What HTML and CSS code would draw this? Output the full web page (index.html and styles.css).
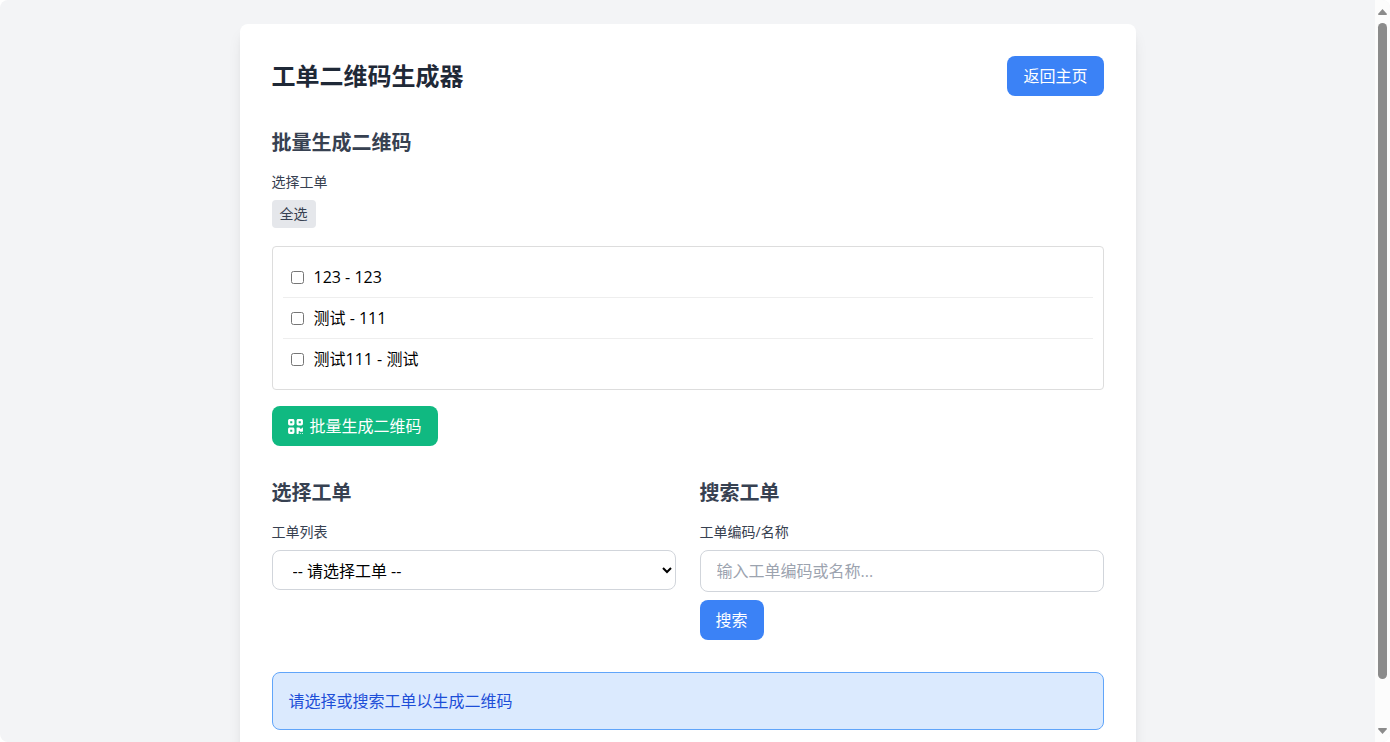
FILE: index.html
```html
<!DOCTYPE html>
<html lang="zh-CN">
<head>
  <meta charset="UTF-8" />
  <meta name="viewport" content="width=device-width, initial-scale=1.0" />
  <title>工单二维码生成器</title>
  <link rel="stylesheet" href="styles.css">
</head>
<body>
  <div class="page">
    <main class="card">
      <header class="card-header">
        <h1>工单二维码生成器</h1>
        <button type="button" class="btn btn-primary">返回主页</button>
      </header>

      <!-- Batch generation -->
      <section class="batch">
        <h2>批量生成二维码</h2>
        <p class="label" id="batchLabel">选择工单</p>
        <button type="button" class="btn-small">全选</button>
        <div class="order-list" role="group" aria-labelledby="batchLabel">
          <label class="order-item"><input type="checkbox" name="order" value="1" />123 - 123</label>
          <label class="order-item"><input type="checkbox" name="order" value="2" />测试 - 111</label>
          <label class="order-item"><input type="checkbox" name="order" value="3" />测试111 - 测试</label>
        </div>
        <button type="button" class="btn btn-success">
          <svg class="icon" viewBox="0 0 448 512" aria-hidden="true">
            <path d="M0 80C0 53.500 21.500 32 48 32h96c26.500 0 48 21.500 48 48v96c0 26.500-21.500 48-48 48H48c-26.500 0-48-21.500-48-48V80zM64 96v64h64V96H64zM0 336c0-26.500 21.500-48 48-48h96c26.500 0 48 21.500 48 48v96c0 26.500-21.500 48-48 48H48c-26.500 0-48-21.500-48-48V336zM64 352v64h64V352H64zM304 32h96c26.500 0 48 21.500 48 48v96c0 26.500-21.500 48-48 48H304c-26.500 0-48-21.500-48-48V80c0-26.500 21.500-48 48-48zM384 96H320v64h64V96zM256 304c0-8.800 7.200-16 16-16h64c8.800 0 16 7.200 16 16s7.200 16 16 16h32c8.800 0 16-7.200 16-16s7.200-16 16-16s16 7.200 16 16v96c0 8.800-7.200 16-16 16H368c-8.800 0-16-7.200-16-16s-7.200-16-16-16s-16 7.200-16 16v64c0 8.800-7.200 16-16 16H272c-8.800 0-16-7.200-16-16V304zM368 480a16 16 0 1 1 0-32 16 16 0 1 1 0 32zM432 480a16 16 0 1 1 0-32 16 16 0 1 1 0 32z" />
          </svg>
          批量生成二维码
        </button>
      </section>

      <!-- Pick or search a single order -->
      <div class="columns">
        <section>
          <h2>选择工单</h2>
          <label class="label" for="orderSelect">工单列表</label>
          <select class="field" id="orderSelect">
            <option value="">-- 请选择工单 --</option>
            <option value="1">123 - 123</option>
            <option value="2">测试 - 111</option>
            <option value="3">测试111 - 测试</option>
          </select>
        </section>
        <section>
          <h2>搜索工单</h2>
          <label class="label" for="orderSearch">工单编码/名称</label>
          <input class="field" type="text" id="orderSearch" placeholder="输入工单编码或名称..." />
          <button type="button" class="btn btn-primary btn-search">搜索</button>
        </section>
      </div>

      <div class="alert">请选择或搜索工单以生成二维码</div>
    </main>
  </div>

  <div class="scrollbar" aria-hidden="true">
    <svg class="arrow" viewBox="0 0 9 6"><path d="M4.500 0 L9 5 Q9 6 8 6 H1 Q0 6 0 5 Z" /></svg>
    <div class="track"><div class="thumb"></div></div>
    <svg class="arrow" viewBox="0 0 9 6"><path d="M0 1 Q0 0 1 0 H8 Q9 0 9 1 L4.500 6 Z" /></svg>
  </div>
</body>
</html>
```
FILE: styles.css
```css
* {
  box-sizing: border-box;
}

html {
  background: #fff;
}

body {
  display: flex;
  height: 100vh;
  margin: 0;
  overflow: hidden;
  border-radius: 8px;
  background: #f3f4f6;
  color: #000;
  font-family: "Open Sans", "Noto Sans CJK SC", sans-serif;
  font-size: 16px;
  line-height: 24px;
}

h1, h2, p {
  margin: 0;
}

h1 {
  color: #1f2937;
  font-size: 24px;
  line-height: 32px;
}

h2 {
  margin-bottom: 14px;
  color: #374151;
  font-size: 20px;
  line-height: 30px;
}

button, input, select {
  font: inherit;
}

.page {
  flex: 1;
  min-width: 0;
  padding: 24px;
  overflow: hidden;
}

.card {
  max-width: 896px;
  margin: 0 auto;
  padding: 32px;
  border-radius: 8px;
  background: #fff;
  box-shadow: 0 10px 15px -3px rgba(0, 0, 0, 0.1), 0 4px 6px -4px rgba(0, 0, 0, 0.1);
}

.card-header {
  display: flex;
  justify-content: space-between;
  align-items: center;
  margin-bottom: 32px;
}

.label {
  display: block;
  margin-bottom: 8px;
  color: #374151;
  font-size: 14px;
  line-height: 20px;
}

.btn {
  display: inline-flex;
  align-items: center;
  gap: 7px;
  padding: 8px 16px;
  border: none;
  border-radius: 8px;
  color: #fff;
  cursor: pointer;
}

.btn-primary {
  background: #3b82f6;
}

.btn-success {
  background: #10b981;
}

.btn-small {
  display: block;
  padding: 4px 8px;
  border: none;
  border-radius: 4px;
  background: #e5e7eb;
  color: #374151;
  font-size: 14px;
  line-height: 20px;
  cursor: pointer;
}

.btn-search {
  margin-top: 8px;
}

.icon {
  width: 15px;
  height: 17px;
  fill: currentColor;
}

.batch {
  margin-bottom: 32px;
}

.order-list {
  margin: 18px 0 16px;
  padding: 10px;
  border: 1px solid #ddd;
  border-radius: 4px;
}

.order-item {
  display: flex;
  align-items: center;
  gap: 10px;
  padding: 8px;
  border-bottom: 1px solid #eee;
}

.order-item:last-child {
  border-bottom: none;
}

.order-item input {
  width: 13px;
  height: 13px;
  margin: 0;
}

.columns {
  display: grid;
  grid-template-columns: 1fr 1fr;
  gap: 24px;
  margin-bottom: 32px;
}

.field {
  display: block;
  width: 100%;
  padding: 8px 16px;
  border: 1px solid #d1d5db;
  border-radius: 8px;
  background: #fff;
  color: #000;
}

select.field {
  height: 40px;
}

input.field {
  height: 42px;
}

.field::placeholder {
  color: #9ca3af;
}

.alert {
  padding: 16px;
  border: 1px solid #60a5fa;
  border-radius: 8px;
  background: #dbeafe;
  color: #1d4ed8;
}

/* Scrollbar */
.scrollbar {
  display: flex;
  flex-direction: column;
  align-items: center;
  gap: 14px;
  width: 15px;
  padding: 9px 0 8px;
  background: #fcfcfc;
}

.arrow {
  width: 9px;
  height: 6px;
  fill: #8b8b8b;
}

.track {
  flex: 1;
  margin-top: -6px;
}

.thumb {
  width: 9px;
  height: 95%;
  border-radius: 5px;
  background: #8b8b8b;
}
```
